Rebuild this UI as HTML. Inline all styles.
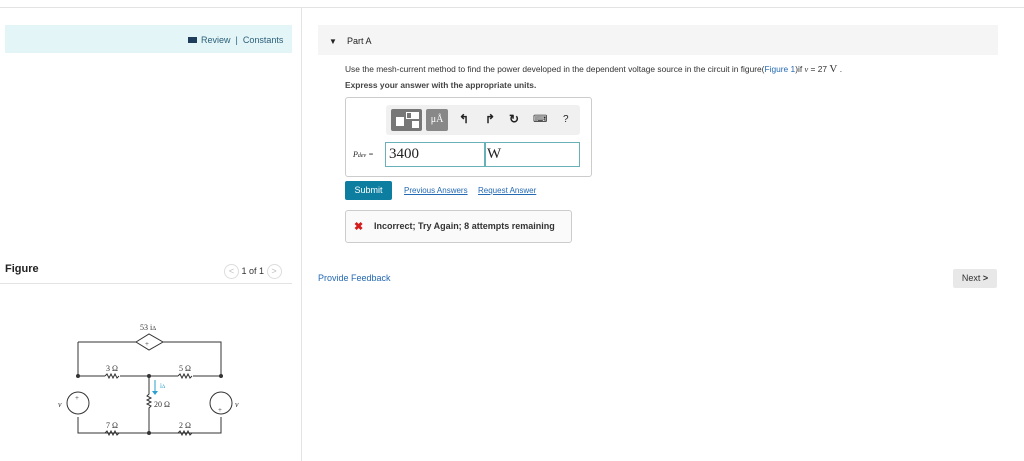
<!DOCTYPE html>
<html><head><style>
body{margin:0;width:1024px;height:461px;background:#fff;font-family:"Liberation Sans",sans-serif;position:relative;overflow:hidden;color:#222}
.a{position:absolute}
</style></head><body>
<div class="a" style="left:0;top:7px;width:1024px;height:1px;background:#e3e3e3"></div>
<div class="a" style="left:301px;top:8px;width:1px;height:453px;background:#e3e3e3"></div>
<div class="a" style="left:5px;top:25px;width:287px;height:28px;background:#e4f5f7"></div>
<div class="a" style="left:188px;top:35px;font-size:9px;color:#2c5f7a"><span style="display:inline-block;width:9px;height:6px;background:#1d3d5a;margin-right:4px"></span>Review &nbsp;|&nbsp; Constants</div>
<div class="a" style="left:5px;top:263px;font-size:11px;font-weight:bold">Figure</div>
<div class="a" style="left:0;top:283px;width:292px;height:1px;background:#e3e3e3"></div>
<div class="a" style="left:224px;top:264px;font-size:9px;color:#333"><span style="display:inline-block;width:13px;height:13px;border:1px solid #ddd;border-radius:50%;text-align:center;color:#bbb;line-height:13px">&lt;</span> 1 of 1 <span style="display:inline-block;width:13px;height:13px;border:1px solid #ddd;border-radius:50%;text-align:center;color:#bbb;line-height:13px">&gt;</span></div>
<svg class="a" style="left:50px;top:310px" width="220" height="150" font-family="Liberation Serif,serif" font-size="8" fill="#333">
<g stroke="#333" stroke-width="1" fill="none">
<path d="M28 32H86M113 32H171V66M171 107V123H28V107M28 66V32"/>
<path d="M86 32L99 24L113 32L99 40Z"/>
<path d="M28 66H55M70 66H99M99 66H128M143 66H171"/>
<path d="M55 66l2-2 2 4 2-4 2 4 2-4 2 4 2-2M128 66l2-2 2 4 2-4 2 4 2-4 2 4 2-2M55 123l2-2 2 4 2-4 2 4 2-4 2 4 2-2M128 123l2-2 2 4 2-4 2 4 2-4 2 4 2-2"/>
<path d="M99 66V84l-2 2 4 2-4 2 4 2-4 2 4 2-2 2V123"/>
<circle cx="28" cy="93" r="11"/><circle cx="171" cy="93" r="11"/>
</g>
<circle cx="28" cy="66" r="2"/><circle cx="99" cy="66" r="2"/><circle cx="171" cy="66" r="2"/><circle cx="99" cy="123" r="2"/>
<text x="90" y="20">53 i<tspan font-size="6">Δ</tspan></text>
<text x="56" y="61">3 Ω</text><text x="129" y="61">5 Ω</text><text x="56" y="118">7 Ω</text><text x="129" y="118">2 Ω</text>
<text x="104" y="97">20 Ω</text><text x="8" y="97" font-style="italic">v</text><text x="185" y="97" font-style="italic">v</text>
<text x="95" y="36" font-size="7">+</text><text x="25" y="90" font-size="7">+</text><text x="168" y="102" font-size="7">+</text>
<path d="M105 70V83" stroke="#2a9fd0"/><path d="M102 81l3 4 3-4z" fill="#2a9fd0"/><text x="110" y="78" fill="#2a9fd0" font-size="7">i<tspan font-size="5">Δ</tspan></text>
</svg>
<div class="a" style="left:318px;top:25px;width:680px;height:30px;background:#f5f5f5"></div>
<div class="a" style="left:329px;top:37px;font-size:8px">▼</div>
<div class="a" style="left:347px;top:36px;font-size:9px">Part A</div>
<div class="a" style="left:345px;top:63px;font-size:8.4px;color:#333;white-space:nowrap">Use the mesh-current method to find the power developed in the dependent voltage source in the circuit in figure(<span style="color:#2469b3">Figure 1</span>)if <i style="font-family:Liberation Serif">v</i> = 27 <span style="font-family:Liberation Serif;font-size:11px">V</span> .</div>
<div class="a" style="left:345px;top:80px;font-size:8.4px;font-weight:bold;color:#444">Express your answer with the appropriate units.</div>
<div class="a" style="left:345px;top:97px;width:245px;height:78px;border:1px solid #ccc;border-radius:3px"></div>
<div class="a" style="left:386px;top:105px;width:194px;height:30px;background:#f0f0f0;border-radius:3px"></div>
<div class="a" style="left:391px;top:109px;width:31px;height:22px;background:#777;border-radius:2px"></div>
<div class="a" style="left:396px;top:117px;width:8px;height:9px;background:#fff"></div>
<div class="a" style="left:406px;top:112px;width:4px;height:5px;border:1px solid #fff"></div>
<div class="a" style="left:412px;top:112px;width:7px;height:7px;background:#fff"></div>
<div class="a" style="left:412px;top:121px;width:7px;height:7px;background:#fff"></div>
<div class="a" style="left:426px;top:109px;width:22px;height:22px;background:#888;border-radius:2px;color:#fff;font-size:10px;text-align:center;line-height:22px;font-family:Liberation Serif">μÅ</div>
<div class="a" style="left:459px;top:112px;font-size:12px;font-weight:bold">↰</div>
<div class="a" style="left:485px;top:112px;font-size:12px;font-weight:bold">↱</div>
<div class="a" style="left:509px;top:112px;font-size:12px;font-weight:bold">↻</div>
<div class="a" style="left:533px;top:114px;font-size:10px">⌨</div>
<div class="a" style="left:563px;top:114px;font-size:10px">?</div>
<div class="a" style="left:353px;top:150px;font-size:8px;font-style:italic;font-family:Liberation Serif">P<span style="font-size:6px">dev</span> =</div>
<div class="a" style="left:385px;top:142px;width:96px;height:23px;border:1px solid #6ab0b8;font-family:Liberation Serif;font-size:15px;line-height:23px;padding-left:3px">3400</div>
<div class="a" style="left:484px;top:142px;width:92px;height:23px;border:1px solid #6ab0b8;font-family:Liberation Serif;font-size:15px;line-height:23px;padding-left:2px">W</div>
<div class="a" style="left:345px;top:181px;width:47px;height:19px;background:#0e7ea0;color:#fff;font-size:9px;text-align:center;line-height:19px;border-radius:2px">Submit</div>
<div class="a" style="left:404px;top:186px;font-size:8px;color:#2469b3;text-decoration:underline">Previous Answers</div>
<div class="a" style="left:478px;top:186px;font-size:8px;color:#2469b3;text-decoration:underline">Request Answer</div>
<div class="a" style="left:345px;top:210px;width:225px;height:31px;border:1px solid #ccc;border-radius:3px;background:#fafafa"></div>
<div class="a" style="left:354px;top:220px;font-size:11px;color:#d41c1c;font-weight:bold">✖</div>
<div class="a" style="left:374px;top:221px;font-size:9px;font-weight:bold;color:#333">Incorrect; Try Again; 8 attempts remaining</div>
<div class="a" style="left:318px;top:273px;font-size:9px;color:#2469b3">Provide Feedback</div>
<div class="a" style="left:953px;top:269px;width:44px;height:19px;background:#e8e8e8;border-radius:2px;font-size:9px;text-align:center;line-height:19px;color:#333">Next <b>&gt;</b></div>
</body></html>
